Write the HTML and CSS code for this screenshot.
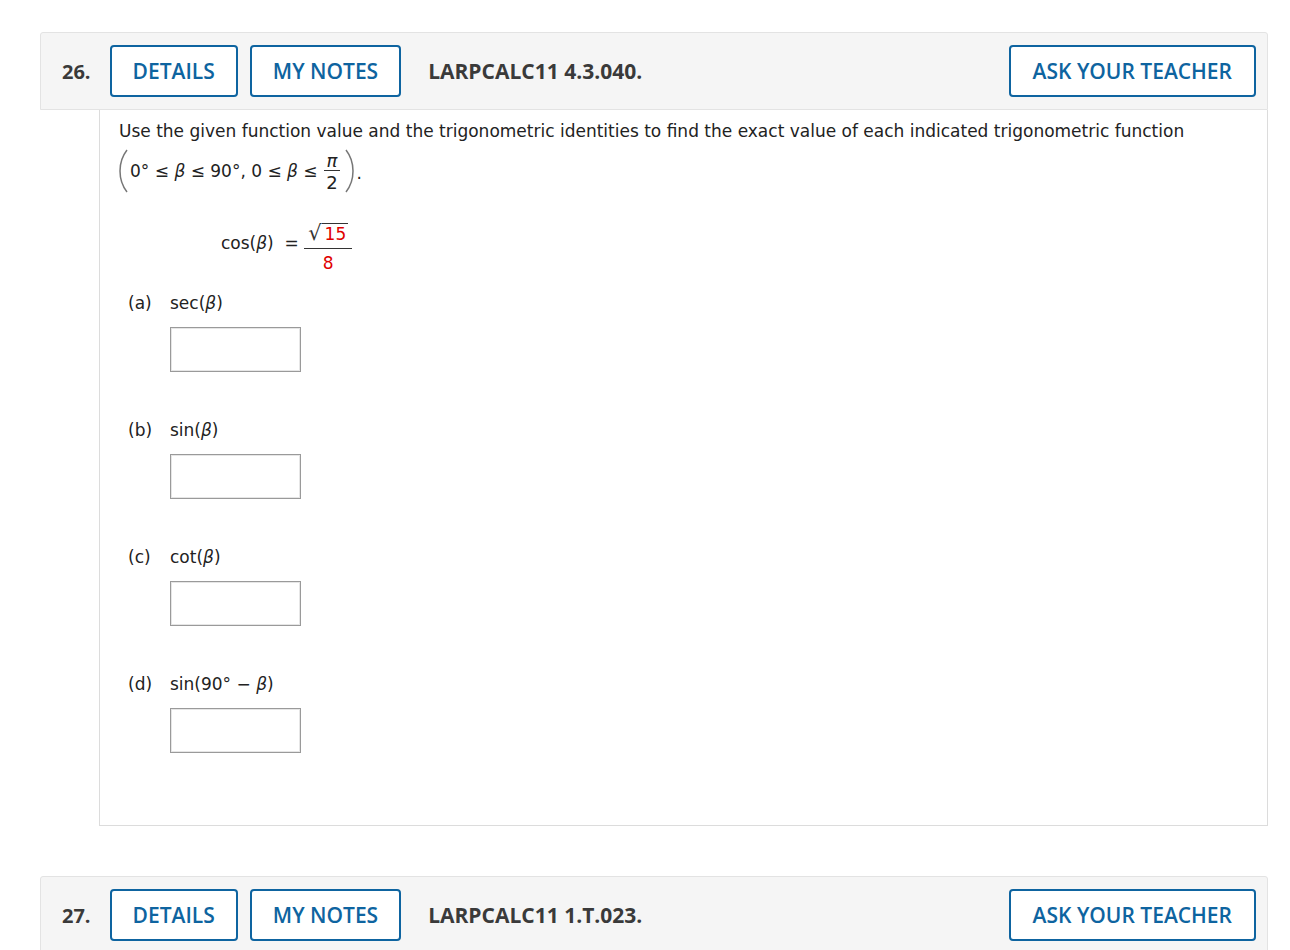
FILE: index.html
```html
<!DOCTYPE html>
<html lang="en">
<head>
    <meta charset="UTF-8">
    <meta name="viewport" content="width=device-width, initial-scale=1.0">
    <title>LARPCALC11 4.3.040.</title>
    <link rel="stylesheet" href="styles.css">
</head>
<body>
    <div class="page">
        <div class="question">
            <div class="q-head">
                <span class="q-num">26.</span>
                <button class="btn">DETAILS</button>
                <button class="btn">MY NOTES</button>
                <span class="q-code">LARPCALC11 4.3.040.</span>
                <button class="btn btn-ask">ASK YOUR TEACHER</button>
            </div>
            <div class="q-body">
                <p class="prompt">Use the given function value and the trigonometric identities to find the exact value of each indicated trigonometric function</p>
                <div class="range">
                    <svg class="paren" width="10" height="44" viewBox="0 0 10 44"><path d="M8 1 Q1 10 1 22 Q1 34 8 43" fill="none" stroke="#777" stroke-width="1.5"/></svg>
                    <span class="range-text">0° ≤ <i>β</i> ≤ 90°, 0 ≤ <i>β</i> ≤</span>
                    <span class="frac frac-small">
                        <span class="num"><i>π</i></span>
                        <span class="den">2</span>
                    </span>
                    <svg class="paren" width="10" height="44" viewBox="0 0 10 44"><path d="M2 1 Q9 10 9 22 Q9 34 2 43" fill="none" stroke="#777" stroke-width="1.5"/></svg>
                    <span class="dot">.</span>
                </div>

                <div class="given">
                    <span class="given-lhs">cos(<i>β</i>) &nbsp;=&nbsp;</span>
                    <span class="frac frac-big">
                        <span class="num red"><span class="sqrt">√</span><span class="radicand">15</span></span>
                        <span class="den red">8</span>
                    </span>
                </div>

                <div class="part part-first">
                    <div class="part-label"><span class="letter">(a)</span>sec(<i>β</i>)</div>
                    <input class="answer" type="text">
                </div>
                <div class="part">
                    <div class="part-label"><span class="letter">(b)</span>sin(<i>β</i>)</div>
                    <input class="answer" type="text">
                </div>
                <div class="part">
                    <div class="part-label"><span class="letter">(c)</span>cot(<i>β</i>)</div>
                    <input class="answer" type="text">
                </div>
                <div class="part">
                    <div class="part-label"><span class="letter">(d)</span>sin(90° − <i>β</i>)</div>
                    <input class="answer" type="text">
                </div>
            </div>
        </div>

        <div class="question">
            <div class="q-head">
                <span class="q-num">27.</span>
                <button class="btn">DETAILS</button>
                <button class="btn">MY NOTES</button>
                <span class="q-code">LARPCALC11 1.T.023.</span>
                <button class="btn btn-ask">ASK YOUR TEACHER</button>
            </div>
        </div>
    </div>
</body>
</html>
```

FILE: styles.css
```css
body {
    margin: 0;
    background: #fff;
    font-family: 'DejaVu Sans', Verdana, sans-serif;
    color: #222;
}
.page {
    padding: 32px 22px 0 40px;
}
.question {
    margin-bottom: 50px;
}
.q-head {
    display: flex;
    align-items: center;
    height: 76px;
    padding: 0 11px 0 21px;
    background: #f5f5f5;
    border: 1px solid #e3e3e3;
    border-radius: 3px 3px 0 0;
    font-family: 'Open Sans', sans-serif;
}
.q-num {
    font-size: 20px;
    font-weight: 700;
    color: #3a3a3a;
    margin-right: 19px;
}
.btn {
    height: 52px;
    padding: 0 21px;
    margin-right: 12px;
    background: #fff;
    border: 2px solid #0e64a0;
    border-radius: 4px;
    color: #0e64a0;
    font-family: 'Open Sans', sans-serif;
    font-size: 21px;
    font-weight: 600;
}
.q-code {
    margin-left: 15px;
    font-size: 21px;
    font-weight: 700;
    color: #3a3a3a;
}
.btn-ask {
    margin-left: auto;
    margin-right: 0;
    padding: 0 22px;
}
.q-body {
    margin-left: 59px;
    padding: 11px 20px 72px 19px;
    border: 1px solid #dcdcdc;
    border-top: none;
    font-size: 17px;
}
.prompt {
    margin: 0;
    line-height: 20px;
}
.range {
    display: flex;
    align-items: center;
    height: 48px;
    margin-top: 6px;
}
.paren {
    display: block;
}
.range-text {
    margin: 0 6px 0 1px;
}
.frac {
    display: inline-flex;
    flex-direction: column;
    align-items: center;
}
.frac .num {
    border-bottom: 1px solid #333;
    padding: 0 3px;
}
.frac-small {
    font-size: 18px;
    line-height: 19px;
    margin-right: 4px;
}
.frac-small .den {
    padding-top: 2px;
}
.dot {
    align-self: flex-end;
    margin-bottom: 12px;
    margin-left: 2px;
}
.given {
    display: flex;
    align-items: center;
    padding-left: 102px;
    margin-top: 24px;
}
.given-lhs {
    margin-bottom: 10px;
}
.frac-big .num {
    padding: 0 4px;
    line-height: 28px;
}
.frac-big .den {
    line-height: 28px;
}
.red {
    color: #e00000;
}
.sqrt {
    color: #333;
    font-size: 21px;
}
.radicand {
    border-top: 1px solid #333;
    padding: 0 2px 0 3px;
}
.part {
    padding-left: 9px;
    margin-top: 48px;
}
.part-first {
    margin-top: 16px;
}
.part-label {
    line-height: 20px;
}
.letter {
    display: inline-block;
    width: 42px;
}
.answer {
    display: block;
    margin: 14px 0 0 42px;
    width: 131px;
    height: 45px;
    box-sizing: border-box;
    border: 1px solid #9a9a9a;
    box-shadow: inset 0 0 0 1px #e6e6e6;
    background: #fff;
    font-size: 16px;
}
```
